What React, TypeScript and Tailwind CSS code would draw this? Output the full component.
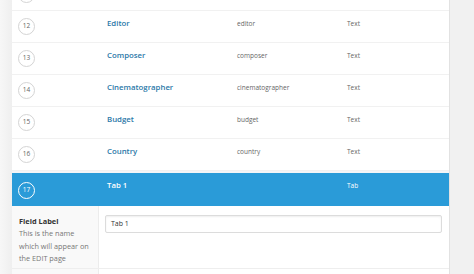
import React from 'react'

interface Field {
  order: number
  label: string
  name: string
  type: string
}

const fields: Field[] = [
  { order: 12, label: 'Editor', name: 'editor', type: 'Text' },
  { order: 13, label: 'Composer', name: 'composer', type: 'Text' },
  { order: 14, label: 'Cinematographer', name: 'cinematographer', type: 'Text' },
  { order: 15, label: 'Budget', name: 'budget', type: 'Text' },
  { order: 16, label: 'Country', name: 'country', type: 'Text' },
]

function OrderBadge({ n, active }: { n?: number; active?: boolean }) {
  return (
    <div
      className={`w-[17px] h-[17px] rounded-full border flex items-center justify-center text-[6.5px] leading-none ${
        active ? 'border-white text-white' : 'border-[#d4d4d4] text-[#666] bg-white'
      }`}
    >
      {n}
    </div>
  )
}

export default function App() {
  return (
    <div
      className="w-[474px] h-[274px] overflow-hidden flex bg-[#f1f1f1]"
      style={{ fontFamily: '"Open Sans", "Liberation Sans", sans-serif' }}
    >
      {/* left gutter */}
      <div className="w-[12px] shrink-0 bg-gradient-to-r from-[#f7f7f7] to-[#efefef]" />

      {/* field list */}
      <div className="w-[438px] shrink-0 bg-white border-r border-[#e2e2e2] flex flex-col">
        {/* partially hidden row */}
        <div className="h-[11px] border-b border-[#f1f1f1] overflow-hidden flex">
          <div className="w-[95px] pl-[6px] -mt-[14px]">
            <OrderBadge />
          </div>
        </div>

        {fields.map((f) => (
          <div key={f.order} className="h-[32px] border-b border-[#f1f1f1] flex">
            <div className="w-[95px] shrink-0 pl-[6px] flex items-center">
              <OrderBadge n={f.order} />
            </div>
            <div className="w-[130px] shrink-0 pt-[7px] text-[7.8px] font-semibold text-[#2b78a8] leading-[10px]">
              {f.label}
            </div>
            <div className="w-[110px] shrink-0 pt-[8px] text-[6.5px] text-[#666] leading-[9px]">
              {f.name}
            </div>
            <div className="pt-[8px] text-[6.5px] text-[#666] leading-[9px]">{f.type}</div>
          </div>
        ))}

        {/* active row */}
        <div className="h-[2px] bg-[#f3f5f7]" />
        <div className="h-[33px] bg-[#2a9bd8] flex">
          <div className="w-[95px] shrink-0 pl-[6px] flex items-center pt-[1px]">
            <OrderBadge n={17} active />
          </div>
          <div className="w-[240px] shrink-0 pt-[7px] text-[7.8px] font-semibold text-white leading-[10px]">
            Tab 1
          </div>
          <div className="pt-[8px] text-[6.5px] text-white leading-[9px]">Tab</div>
        </div>

        {/* edit settings */}
        <div className="h-[63px] border-b border-[#eeeeee] flex">
          <div className="w-[87px] shrink-0 bg-[#f9f9f9] border-r border-[#ececec] pl-[7px] pr-[3px] pt-[9px]">
            <div className="text-[7.4px] font-bold text-[#333] leading-[12px]">Field Label</div>
            <div className="text-[7.3px] text-[#777] leading-[12.5px]">
              This is the name which will appear on the EDIT page
            </div>
          </div>
          <div className="flex-1 pl-[6px] pr-[7px] pt-[9px]">
            <div className="h-[18px] border border-[#dcdcdc] rounded-[2px] shadow-[inset_0_1px_2px_rgba(0,0,0,0.07)] flex items-center pl-[5px] text-[7px] text-[#333]">
              Tab 1
            </div>
          </div>
        </div>
        <div className="flex-1 flex">
          <div className="w-[87px] shrink-0 bg-[#f9f9f9] border-r border-[#ececec]" />
        </div>
      </div>

      {/* right gutter */}
      <div className="flex-1 bg-[#f1f1f1]" />
    </div>
  )
}
